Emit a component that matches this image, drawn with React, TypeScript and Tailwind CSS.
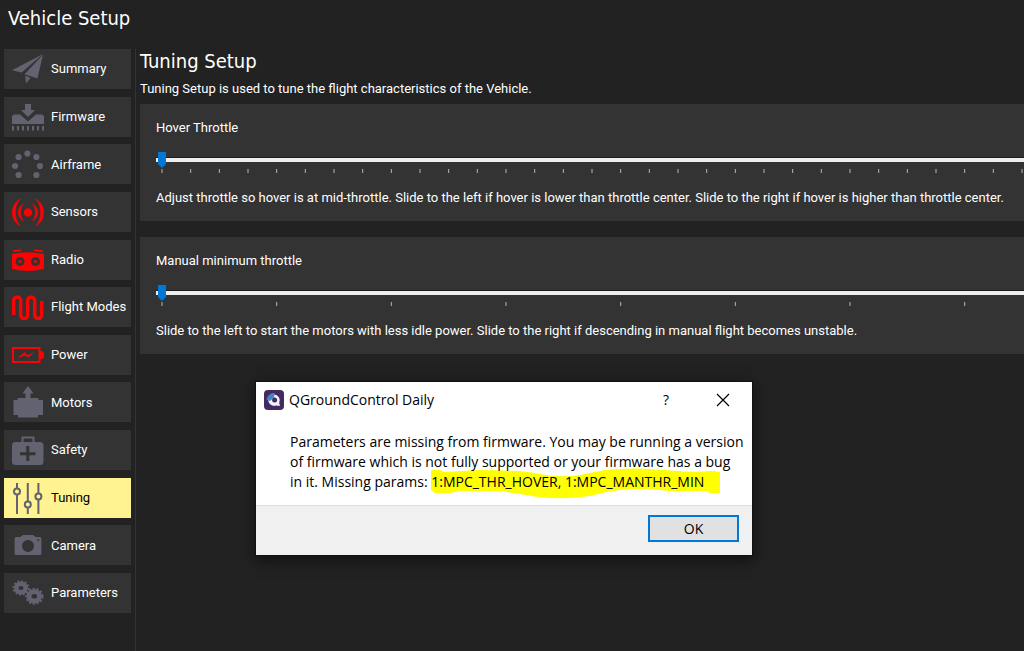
import type { ReactNode } from 'react';

type NavItem = {
  label: string;
  tone: string;
  icon: ReactNode;
  active?: boolean;
};

const idle = 'text-[#626270]';
const alert = 'text-[#fb0303]';

const navItems: NavItem[] = [
  {
    label: 'Summary',
    tone: idle,
    icon: (
      <>
        <path d="M31 1 0 17.2l9.600 2.300z" />
        <path d="M31 1.600 25.400 25.600 12.500 21.200z" />
        <path d="M13.200 22.400 18.600 25 14 30.400z" />
      </>
    ),
  },
  {
    label: 'Firmware',
    tone: idle,
    icon: (
      <>
        <path d="M13 3h6v6h4l-7 7-7-7h4z" />
        <path d="M3 13.500h5L16 20.500l8-7H29q3 0 3 3V23H0v-6.500q0-3 3-3z" />
        <path d="M0 25h2v4.500H0zM5 25h2v4.500H5zM10 25h2v4.500h-2zM15 25h2v4.500h-2zM20 25h2v4.500h-2zM25 25h2v4.500h-2zM30 25h2v4.500h-2z" />
      </>
    ),
  },
  {
    label: 'Airframe',
    tone: idle,
    icon: (
      <>
        <circle cx="15.400" cy="5.600" r="3.100" />
        <circle cx="6.600" cy="9" r="3.100" />
        <circle cx="24.400" cy="9" r="3.100" />
        <circle cx="3" cy="18" r="3.100" />
        <circle cx="28" cy="18" r="3.100" />
        <circle cx="6.600" cy="27" r="3.100" />
        <circle cx="24.400" cy="27" r="3.100" />
      </>
    ),
  },
  {
    label: 'Sensors',
    tone: alert,
    icon: (
      <>
        <circle cx="16" cy="16.500" r="4.200" />
        <path
          d="M11.500 8C4.500 12 4.500 21 11.500 25 7.500 20.500 7.500 12.500 11.500 8zM20.500 8C27.500 12 27.500 21 20.500 25 24.500 20.500 24.500 12.500 20.500 8zM8 3C-2.300 9.500-2.300 23.500 8 30 1.800 22.500 1.800 10.500 8 3zM24 3C34.300 9.500 34.300 23.500 24 30 30.200 22.500 30.200 10.500 24 3z"
          stroke="currentColor"
          strokeWidth=".6"
        />
      </>
    ),
  },
  {
    label: 'Radio',
    tone: alert,
    icon: (
      <>
        <path d="M1.500 6 9 5.600V7.200L1 8zM30.500 6 22 5.600V7.200L31 8z" />
        <path
          fillRule="evenodd"
          d="M0 10Q16 6.500 32 10V25Q16 29 0 25zM8 13a4.500 4.500 0 1 0 0 9 4.500 4.500 0 1 0 0-9zM23.500 13a4.500 4.500 0 1 0 0 9 4.500 4.500 0 1 0 0-9z"
        />
        <circle cx="8" cy="17.500" r="1.500" />
        <circle cx="23.500" cy="17.500" r="1.500" />
      </>
    ),
  },
  {
    label: 'Flight Modes',
    tone: alert,
    icon: (
      <path
        d="M1.700 24V9.500a3.500 3.500 0 0 1 7 0V24a3.500 3.500 0 0 0 7 0V9.500a3.500 3.500 0 0 1 7 0V24a3.500 3.500 0 0 0 7 0V10"
        fill="none"
        stroke="currentColor"
        strokeWidth="3.500"
      />
    ),
  },
  {
    label: 'Power',
    tone: alert,
    icon: (
      <>
        <path fillRule="evenodd" d="M0 8h28.500v4H30l2 1.500v5L30 20h-1.500v4H0zM2 10v12h24.500V10z" />
        <path d="M5.500 19 12.500 13.200 15.500 16.200 22.500 13.200 16.500 18.600 13.200 16.500z" />
      </>
    ),
  },
  {
    label: 'Motors',
    tone: idle,
    icon: (
      <path d="M16 0c2 2.500 4 5 5.500 7.500H18.500V12H26.500v2H31v15H26v2.500H6V29H1.500V14H5.500v-2H13.500V7.500H10.500C12 5 14 2.500 16 0z" />
    ),
  },
  {
    label: 'Safety',
    tone: idle,
    icon: (
      <>
        <path d="M10.500 9V3.500h11V9" fill="none" stroke="currentColor" strokeWidth="2" />
        <path
          fillRule="evenodd"
          d="M3.500 8h24.500q3.500 0 3.500 3.500v16q0 3.500-3.500 3.500H3.500Q0 31 0 27.500v-16Q0 8 3.500 8zM14.300 12v6.200H8v3h6.300V27h3v-5.800h6.200v-3h-6.200V12z"
        />
      </>
    ),
  },
  {
    label: 'Tuning',
    tone: idle,
    active: true,
    icon: (
      <g fill="none" stroke="currentColor" strokeWidth="2">
        <path d="M5 1v5.500M5 12.500V32M15.800 1v18.500M15.800 25.500V32M26.400 1v10.500M26.400 17.500V32" />
        <circle cx="5" cy="9.500" r="3" />
        <circle cx="15.800" cy="22.600" r="3" />
        <circle cx="26.400" cy="14.600" r="3" />
      </g>
    ),
  },
  {
    label: 'Camera',
    tone: idle,
    icon: (
      <path
        fillRule="evenodd"
        d="M4 8h4.500L11 6h10l2.500 2H28q1.400 0 1.400 1.500v15Q29.400 26 28 26H4q-1.400 0-1.400-1.500v-15Q2.600 8 4 8zM16 11a6 6 0 1 0 0 12 6 6 0 1 0 0-12zM26.300 10a1 1 0 1 0 0 2 1 1 0 1 0 0-2z"
      />
    ),
  },
  {
    label: 'Parameters',
    tone: idle,
    icon: (
      <g fill="none" stroke="currentColor">
        <ellipse cx="9" cy="11" rx="4.800" ry="4.200" strokeWidth="4.400" />
        <ellipse cx="9" cy="11" rx="7.600" ry="6.600" strokeWidth="2" strokeDasharray="2 1.700" />
        <ellipse cx="22.300" cy="19.300" rx="5.200" ry="4.700" strokeWidth="4.800" />
        <ellipse cx="22.300" cy="19.300" rx="8.200" ry="7.500" strokeWidth="2" strokeDasharray="2.200 1.700" />
      </g>
    ),
  },
];

function NavButton({ label, tone, icon, active }: NavItem) {
  return (
    <button
      type="button"
      aria-current={active ? 'page' : undefined}
      className={
        active
          ? 'flex h-10 items-center gap-[7px] bg-[#fff291] pl-2 text-left text-black'
          : 'flex h-10 items-center gap-[7px] bg-[#333333] pl-2 text-left text-white'
      }
    >
      <svg viewBox="0 0 32 32" className={`h-8 w-8 shrink-0 ${tone}`} fill="currentColor" aria-hidden="true">
        {icon}
      </svg>
      <span className="whitespace-nowrap">{label}</span>
    </button>
  );
}

type TuningCardProps = {
  id: string;
  title: string;
  description: string;
  intervals: number;
};

function TuningCard({ id, title, description, intervals }: TuningCardProps) {
  const ticks = Array.from({ length: Math.floor(intervals) + 1 }, (_, i) => (i * 100) / intervals);
  return (
    <section className="bg-[#333333] pt-4 pb-[13px] pl-4">
      <label htmlFor={id} className="block leading-4">
        {title}
      </label>
      <input
        id={id}
        type="range"
        min={0}
        max={intervals}
        step="any"
        defaultValue={0}
        className="mt-4 block h-4 w-full cursor-pointer appearance-none bg-[linear-gradient(to_bottom,transparent_5px,#1c1c1c_5px,#1c1c1c_6px,#ecefec_6px,#ecefec_10px,transparent_10px)] px-[2px] [&::-webkit-slider-thumb]:h-4 [&::-webkit-slider-thumb]:w-2 [&::-webkit-slider-thumb]:appearance-none [&::-webkit-slider-thumb]:bg-[#0078d7] [&::-webkit-slider-thumb]:[clip-path:polygon(0_0,100%_0,100%_75%,50%_100%,0_75%)]"
      />
      <div className="pt-px pr-0.5 pl-[6px]">
        <svg className="block h-[5px] w-full overflow-visible" aria-hidden="true">
          {ticks.map((x) => (
            <line key={x} x1={`${x}%`} x2={`${x}%`} y1="0" y2="4" stroke="#b9b6ac" strokeWidth="1" />
          ))}
        </svg>
      </div>
      <p className="mt-3.5 leading-5 whitespace-nowrap">{description}</p>
    </section>
  );
}

function MissingParamsDialog() {
  return (
    <div
      role="dialog"
      aria-labelledby="dialog-title"
      className="absolute top-[381px] left-[255px] w-[498px] border border-[#111111] bg-white font-['Open_Sans','Noto_Sans',sans-serif] text-sm text-black shadow-[0_4px_14px_rgba(0,0,0,0.55)]"
    >
      <header className="flex h-9 items-center pl-2">
        <svg viewBox="0 0 20 20" className="h-5 w-5" aria-hidden="true">
          <rect width="20" height="20" rx="4" fill="#432a63" />
          <path d="M10.500 4.500a5.700 5.700 0 1 0 1.500 11l4 .5-.8-3A6 6 0 0 0 10.500 4.500z" fill="#f3f1f6" />
          <circle cx="10.600" cy="10" r="2.500" fill="#432a63" />
          <path d="M2.500 9.500C3.500 5 7 2.600 10.800 3L10 7.500 6 11z" fill="#4a83bd" />
        </svg>
        <h2 id="dialog-title" className="ml-[5px] flex-1">
          QGroundControl Daily
        </h2>
        <button type="button" aria-label="Help" className="w-10 text-center">
          ?
        </button>
        <button type="button" aria-label="Close" className="mr-[21px] ml-[29px] flex h-6 w-4 items-center justify-center">
          <svg viewBox="0 0 14 14" className="h-[14px] w-[14px] shrink-0" aria-hidden="true">
            <path d="M1 1 13 13M13 1 1 13" stroke="black" strokeWidth="1.200" />
          </svg>
        </button>
      </header>
      <div className="relative isolate pt-3.5 pb-[13px] pl-[34px]">
        <svg viewBox="0 0 290 32" className="absolute bottom-[5px] left-[174px] -z-10 h-8 w-[290px]" aria-hidden="true">
          <path
            d="M1 2H10L14 4 50 2Q90 2 110 6T150 7L175 2Q205-1 235 2T280 3H286V4H290V25H279V23H240Q200 18 172 25L160 28Q125 33 96 27L70 23H30L20 25H5L1 22z"
            fill="#ffff00"
          />
        </svg>
        <p className="leading-5 whitespace-nowrap">
          Parameters are missing from firmware. You may be running a version
          <br />
          of firmware which is not fully supported or your firmware has a bug
          <br />
          in it. Missing params: 1:MPC_THR_HOVER, 1:MPC_MANTHR_MIN
        </p>
      </div>
      <footer className="flex h-[50px] justify-end border-t border-[#dfdfdf] bg-[#f0f0f0] pt-[9px] pr-[13px]">
        <button type="button" className="h-[27px] w-[91px] border-2 border-[#0078d7] bg-[#e1e1e1] leading-5">
          OK
        </button>
      </footer>
    </div>
  );
}

export default function App() {
  return (
    <div className="relative min-h-screen overflow-hidden bg-[#222222] font-['Roboto','Noto_Sans',sans-serif] text-[13px] text-white">
      <header className="h-[49px] px-2 pt-1">
        <h1 className="font-['DejaVu_Sans_Condensed','Noto_Sans',sans-serif] text-xl leading-7">Vehicle Setup</h1>
      </header>
      <div className="flex">
        <nav aria-label="Vehicle setup" className="ml-1 flex h-[564px] w-[127px] shrink-0 flex-col justify-between">
          {navItems.map((item) => (
            <NavButton key={item.label} {...item} />
          ))}
        </nav>
        <main className="ml-1 min-h-[602px] min-w-0 flex-1 border-l border-[#333333] pl-1">
          <h2 className="font-['DejaVu_Sans_Condensed','Noto_Sans',sans-serif] text-xl leading-6">Tuning Setup</h2>
          <p className="mt-1.5 mb-[5px] leading-5">Tuning Setup is used to tune the flight characteristics of the Vehicle.</p>
          <div className="flex flex-col gap-4">
            <TuningCard
              id="hover-throttle"
              title="Hover Throttle"
              description="Adjust throttle so hover is at mid-throttle. Slide to the left if hover is lower than throttle center. Slide to the right if hover is higher than throttle center."
              intervals={30}
            />
            <TuningCard
              id="manual-minimum-throttle"
              title="Manual minimum throttle"
              description="Slide to the left to start the motors with less idle power. Slide to the right if descending in manual flight becomes unstable."
              intervals={7.5}
            />
          </div>
        </main>
      </div>
      <MissingParamsDialog />
    </div>
  );
}
